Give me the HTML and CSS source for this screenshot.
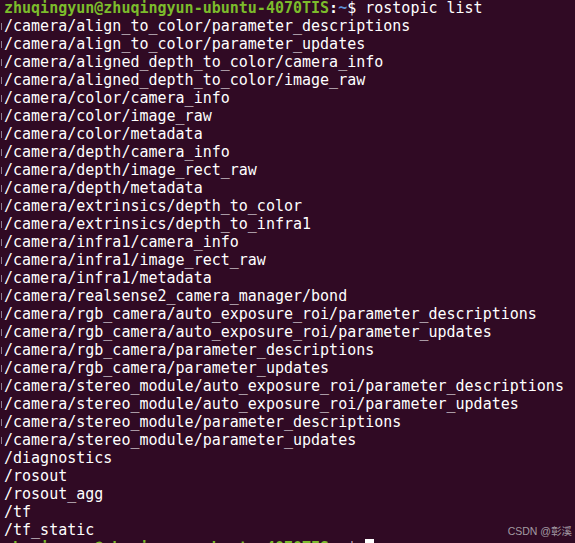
FILE: index.html
```html
<!DOCTYPE html>
<html>
<head>
<meta charset="utf-8">
<link rel="stylesheet" href="styles.css">
</head>
<body>
<div class="term">
<div class="line"><span class="user">zhuqingyun@zhuqingyun-ubuntu-4070TIS</span><span class="sep">:</span><span class="path">~</span>$ rostopic list</div>
<div class="line cam">/camera/align_to_color/parameter_descriptions</div>
<div class="line cam">/camera/align_to_color/parameter_updates</div>
<div class="line cam">/camera/aligned_depth_to_color/camera_info</div>
<div class="line cam">/camera/aligned_depth_to_color/image_raw</div>
<div class="line cam">/camera/color/camera_info</div>
<div class="line cam">/camera/color/image_raw</div>
<div class="line cam">/camera/color/metadata</div>
<div class="line cam">/camera/depth/camera_info</div>
<div class="line cam">/camera/depth/image_rect_raw</div>
<div class="line cam">/camera/depth/metadata</div>
<div class="line cam">/camera/extrinsics/depth_to_color</div>
<div class="line cam">/camera/extrinsics/depth_to_infra1</div>
<div class="line cam">/camera/infra1/camera_info</div>
<div class="line cam">/camera/infra1/image_rect_raw</div>
<div class="line cam">/camera/infra1/metadata</div>
<div class="line cam">/camera/realsense2_camera_manager/bond</div>
<div class="line cam">/camera/rgb_camera/auto_exposure_roi/parameter_descriptions</div>
<div class="line cam">/camera/rgb_camera/auto_exposure_roi/parameter_updates</div>
<div class="line cam">/camera/rgb_camera/parameter_descriptions</div>
<div class="line cam">/camera/rgb_camera/parameter_updates</div>
<div class="line cam">/camera/stereo_module/auto_exposure_roi/parameter_descriptions</div>
<div class="line cam">/camera/stereo_module/auto_exposure_roi/parameter_updates</div>
<div class="line cam">/camera/stereo_module/parameter_descriptions</div>
<div class="line cam">/camera/stereo_module/parameter_updates</div>
<div class="line">/diagnostics</div>
<div class="line">/rosout</div>
<div class="line">/rosout_agg</div>
<div class="line">/tf</div>
<div class="line">/tf_static</div>
<div class="line"><span class="user">zhuqingyun@zhuqingyun-ubuntu-4070TIS</span><span class="sep">:</span><span class="path">~</span>$ <span class="cursor"> </span></div>
</div>
<div class="watermark">CSDN @彰溪</div>
</body>
</html>
```
FILE: styles.css
```css
html, body {
  margin: 0;
  padding: 0;
  background: #300a24;
  overflow: hidden;
}
body {
  width: 575px;
  height: 543px;
  position: relative;
}
.term {
  margin-top: -1px;
  font-family: "DejaVu Sans Mono", "Liberation Mono", monospace;
  font-size: 15px;
  line-height: 18px;
  color: #ffffff;
}
.line {
  height: 18px;
  padding-left: 4px;
  white-space: pre;
}
.line.cam {
  background: linear-gradient(#8d7f93, #8d7f93) 1px 6px / 1px 7px no-repeat;
}
.user {
  color: #7cbc2b;
  font-weight: bold;
}
.sep {
  color: #ffffff;
  font-weight: bold;
}
.path {
  color: #5d8fd3;
  font-weight: bold;
}
.cursor {
  display: inline-block;
  width: 9px;
  height: 18px;
  background: #ffffff;
  vertical-align: top;
}
.watermark {
  position: absolute;
  right: 3px;
  top: 523px;
  font-family: "Liberation Sans", "Noto Sans CJK SC", sans-serif;
  font-size: 10.5px;
  line-height: 16px;
  color: #a39aa3;
}
```
